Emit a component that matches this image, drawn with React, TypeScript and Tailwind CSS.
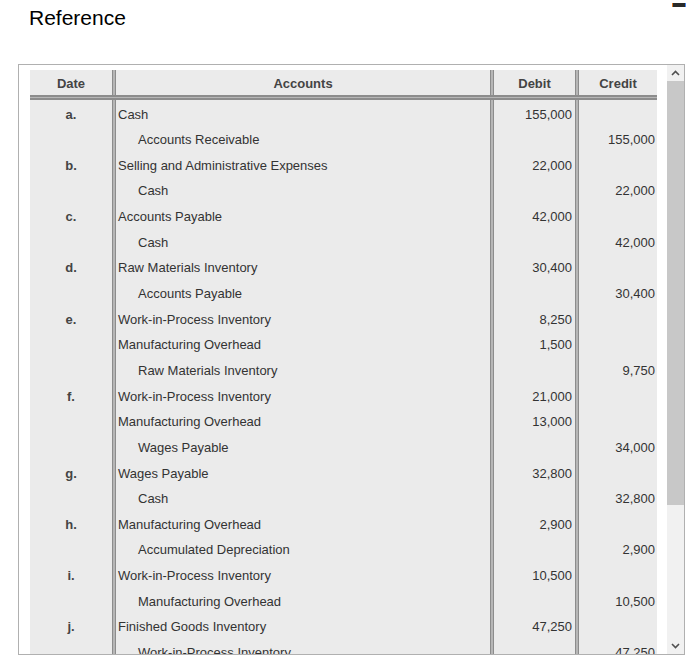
import type { ReactNode } from 'react'

type Line = {
  date?: string
  account: string
  credit?: boolean
  amount: string
}

const lines: Line[] = [
  { date: 'a.', account: 'Cash', amount: '155,000' },
  { account: 'Accounts Receivable', credit: true, amount: '155,000' },
  { date: 'b.', account: 'Selling and Administrative Expenses', amount: '22,000' },
  { account: 'Cash', credit: true, amount: '22,000' },
  { date: 'c.', account: 'Accounts Payable', amount: '42,000' },
  { account: 'Cash', credit: true, amount: '42,000' },
  { date: 'd.', account: 'Raw Materials Inventory', amount: '30,400' },
  { account: 'Accounts Payable', credit: true, amount: '30,400' },
  { date: 'e.', account: 'Work-in-Process Inventory', amount: '8,250' },
  { account: 'Manufacturing Overhead', amount: '1,500' },
  { account: 'Raw Materials Inventory', credit: true, amount: '9,750' },
  { date: 'f.', account: 'Work-in-Process Inventory', amount: '21,000' },
  { account: 'Manufacturing Overhead', amount: '13,000' },
  { account: 'Wages Payable', credit: true, amount: '34,000' },
  { date: 'g.', account: 'Wages Payable', amount: '32,800' },
  { account: 'Cash', credit: true, amount: '32,800' },
  { date: 'h.', account: 'Manufacturing Overhead', amount: '2,900' },
  { account: 'Accumulated Depreciation', credit: true, amount: '2,900' },
  { date: 'i.', account: 'Work-in-Process Inventory', amount: '10,500' },
  { account: 'Manufacturing Overhead', credit: true, amount: '10,500' },
  { date: 'j.', account: 'Finished Goods Inventory', amount: '47,250' },
  { account: 'Work-in-Process Inventory', credit: true, amount: '47,250' },
]

function Sep() {
  return <div className="w-[4px] shrink-0 self-stretch border-x border-[#8c8c8c] bg-[#b6b6b6]" />
}

function Row({ children, header }: { children: ReactNode; header?: boolean }) {
  return (
    <div className={header ? 'flex h-[25px] shrink-0' : 'flex h-[25.65px] shrink-0'}>{children}</div>
  )
}

function Chevron({ down }: { down?: boolean }) {
  return (
    <svg width="9" height="6" viewBox="0 0 9 6" className={down ? 'rotate-180' : ''}>
      <path d="M1 5 L4.5 1.5 L8 5" fill="none" stroke="#505050" strokeWidth="1.6" />
    </svg>
  )
}

export default function App() {
  return (
    <div className="h-[656px] w-[694px] overflow-hidden bg-white font-['Liberation_Sans',Arial,sans-serif]">
      <div className="flex h-[64px] items-start justify-between">
        <div className="pl-[29px] pt-[6px] text-[21px] leading-[24px] text-black">Reference</div>
        <div className="mr-[8px] mt-[3px] h-[4px] w-[14px] border-l border-r border-l-[#e07a1f] border-r-[#3b82f6] bg-[#2a2a2a]" />
      </div>

      <div className="ml-[18px] flex h-[591px] w-[667px] overflow-hidden border border-[#b0b0b0]">
        <div className="ml-[11px] mt-[5px] flex w-[627px] flex-col overflow-hidden bg-[#ebebeb] text-[13px] text-[#333]">
          <Row header>
            <div className="flex w-[82px] items-center justify-center pt-[3px] font-bold text-[#444]">Date</div>
            <Sep />
            <div className="flex w-[374px] items-center justify-center pt-[3px] font-bold text-[#444]">Accounts</div>
            <Sep />
            <div className="flex w-[81px] items-center justify-center pt-[3px] font-bold text-[#444]">Debit</div>
            <Sep />
            <div className="flex w-[78px] items-center justify-center pt-[3px] font-bold text-[#444]">Credit</div>
          </Row>
          <div className="h-[5px] shrink-0 border-y-2 border-[#8c8c8c] bg-[#b6b6b6]" />
          {lines.map((l, i) => (
            <Row key={i}>
              <div className="flex w-[82px] items-center justify-center pt-[3px] font-bold text-[#444]">{l.date}</div>
              <Sep />
              <div className={l.credit ? 'flex w-[374px] items-center pl-[22px] pt-[3px]' : 'flex w-[374px] items-center pl-[2px] pt-[3px]'}>
                {l.account}
              </div>
              <Sep />
              <div className="flex w-[81px] items-center justify-end pr-[3px] pt-[3px]">{l.credit ? '' : l.amount}</div>
              <Sep />
              <div className="flex w-[78px] items-center justify-end pr-[2px] pt-[3px]">{l.credit ? l.amount : ''}</div>
            </Row>
          ))}
        </div>

        <div className="ml-[10px] flex w-[17px] flex-col bg-[#f1f1f1]">
          <div className="flex h-[16px] items-center justify-center">
            <Chevron />
          </div>
          <div className="h-[424px] bg-[#c8c8c8]" />
          <div className="flex-1" />
          <div className="flex h-[16px] items-center justify-center">
            <Chevron down />
          </div>
        </div>
      </div>
    </div>
  )
}
